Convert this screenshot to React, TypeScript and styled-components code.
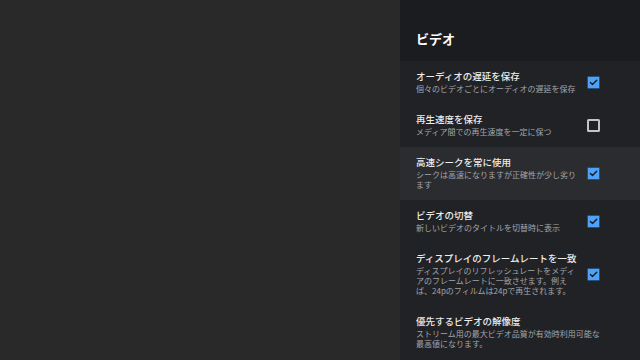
import React from "react";
import styled, { createGlobalStyle } from "styled-components";

const GlobalStyle = createGlobalStyle`
  html, body {
    margin: 0;
    padding: 0;
    background: #292929;
  }
  body {
    font-family: "Noto Sans CJK JP", "Noto Sans", sans-serif;
  }
`;

const Screen = styled.div`
  width: 640px;
  height: 360px;
  display: flex;
  overflow: hidden;
  background: #292929;
`;

const Backdrop = styled.div`
  flex: 1;
`;

const Panel = styled.aside`
  width: 240px;
  height: 100%;
  display: flex;
  flex-direction: column;
  background: #212226;
`;

const Header = styled.header`
  height: 61px;
  flex-shrink: 0;
  box-sizing: border-box;
  padding: 29px 16px 0;
  background: #1b1c1f;
`;

const Heading = styled.h2`
  margin: 0;
  font-size: 13px;
  line-height: 20px;
  font-weight: 700;
  color: #ffffff;
`;

const List = styled.div`
  display: flex;
  flex-direction: column;
`;

const Row = styled.div<{ $focused?: boolean }>`
  display: flex;
  align-items: center;
  gap: 8px;
  padding: 9px 38px 10px 16px;
  background: ${(p) => (p.$focused ? "#2b2c30" : "transparent")};
`;

const Texts = styled.div`
  flex: 1;
  min-width: 0;
  display: flex;
  flex-direction: column;
  gap: 2px;
`;

const Title = styled.div`
  font-size: 9.5px;
  line-height: 12px;
  font-weight: 500;
  color: #ececec;
  white-space: nowrap;
`;

const Subtitle = styled.div`
  font-size: 8px;
  line-height: 10px;
  color: #a3a4a8;
  word-break: break-all;
`;

const Box = styled.span<{ $checked: boolean }>`
  width: 13px;
  height: 13px;
  flex-shrink: 0;
  box-sizing: border-box;
  border-radius: 1.5px;
  display: flex;
  align-items: center;
  justify-content: center;
  margin-right: 2px;
  background: ${(p) => (p.$checked ? "#4ea3f8" : "transparent")};
  border: ${(p) => (p.$checked ? "1px solid #2a4e78" : "2px solid #c4c4c4")};
`;

const Checkbox = ({ checked }: { checked: boolean }) => (
  <Box $checked={checked}>
    {checked && (
      <svg width="9" height="9" viewBox="0 0 9 9">
        <path
          d="M1.4 4.6 L3.5 6.6 L7.7 2.3"
          fill="none"
          stroke="#15191f"
          strokeWidth="1.4"
          strokeLinecap="round"
          strokeLinejoin="round"
        />
      </svg>
    )}
  </Box>
);

type Setting = {
  title: string;
  subtitle: string;
  checked?: boolean;
  focused?: boolean;
};

const settings: Setting[] = [
  {
    title: "オーディオの遅延を保存",
    subtitle: "個々のビデオごとにオーディオの遅延を保存",
    checked: true,
  },
  {
    title: "再生速度を保存",
    subtitle: "メディア間での再生速度を一定に保つ",
    checked: false,
  },
  {
    title: "高速シークを常に使用",
    subtitle: "シークは高速になりますが正確性が少し劣ります",
    checked: true,
    focused: true,
  },
  {
    title: "ビデオの切替",
    subtitle: "新しいビデオのタイトルを切替時に表示",
    checked: true,
  },
  {
    title: "ディスプレイのフレームレートを一致",
    subtitle:
      "ディスプレイのリフレッシュレートをメディアのフレームレートに一致させます。例えば、24pのフィルムは24pで再生されます。",
    checked: true,
  },
  {
    title: "優先するビデオの解像度",
    subtitle: "ストリーム用の最大ビデオ品質が有効時利用可能な最高値になります。",
  },
];

export default function App() {
  return (
    <>
      <GlobalStyle />
      <Screen>
        <Backdrop />
        <Panel>
          <Header>
            <Heading>ビデオ</Heading>
          </Header>
          <List>
            {settings.map((s) => (
              <Row key={s.title} $focused={s.focused}>
                <Texts>
                  <Title>{s.title}</Title>
                  <Subtitle>{s.subtitle}</Subtitle>
                </Texts>
                {s.checked !== undefined && <Checkbox checked={s.checked} />}
              </Row>
            ))}
          </List>
        </Panel>
      </Screen>
    </>
  );
}
